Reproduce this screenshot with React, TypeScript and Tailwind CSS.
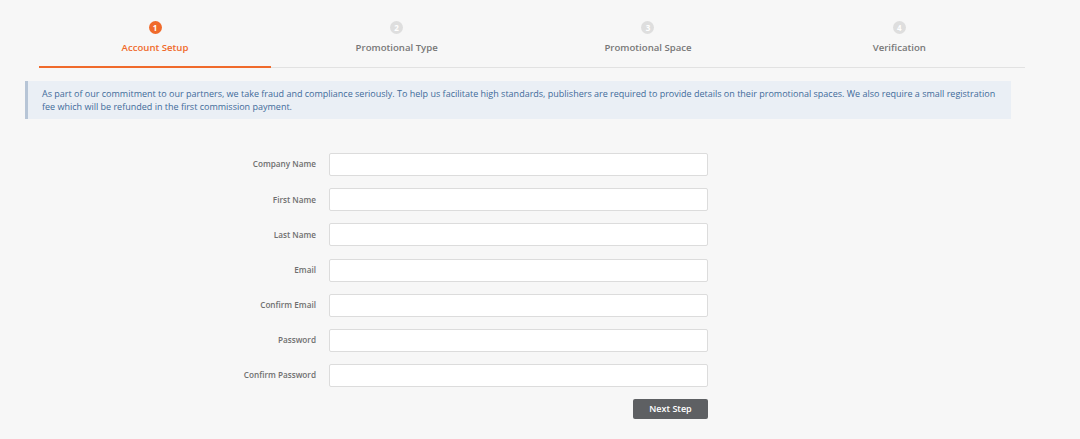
const steps = ['Account Setup', 'Promotional Type', 'Promotional Space', 'Verification'];

const fields = [
    'Company Name',
    'First Name',
    'Last Name',
    'Email',
    'Confirm Email',
    'Password',
    'Confirm Password',
];

export default function App() {
    return (
        <div
            className="min-h-[439px] w-[1080px] bg-[#f7f7f7] pt-[21px]"
            style={{ fontFamily: '"Open Sans", "Noto Sans", sans-serif' }}
        >
            {/* Stepper */}
            <div className="ml-[39px] flex w-[986px] border-b border-[#e2e2e2]">
                {steps.map((label, i) => {
                    const active = i === 0;
                    return (
                        <div
                            key={label}
                            className={
                                (i === 0 ? 'w-[232px] ' : 'flex-1 ') +
                                'flex flex-col items-center pb-[11px] -mb-px border-b-2 ' +
                                (active ? 'border-[#f06a2b]' : 'border-transparent')
                            }
                        >
                            <span
                                className={
                                    'flex h-[13px] w-[13px] items-center justify-center rounded-full text-[8px] font-bold leading-none text-white ' +
                                    (active ? 'bg-[#f06a2b]' : 'bg-[#dedede]')
                                }
                            >
                                {i + 1}
                            </span>
                            <span
                                className={
                                    'mt-[7px] text-[9.6px] font-semibold leading-[14px] ' +
                                    (active ? 'text-[#f06a2b]' : 'text-[#777]')
                                }
                            >
                                {label}
                            </span>
                        </div>
                    );
                })}
            </div>

            {/* Notice */}
            <div className="ml-[25px] mt-[13px] w-[986px] border-l-[3px] border-[#b7c5d6] bg-[#eaeff5] py-[6px] pl-[14px] pr-[4px] text-[9px] leading-[13px] text-[#3f6b9a]">
                As part of our commitment to our partners, we take fraud and compliance seriously. To help us facilitate high standards, publishers are required to provide details on their promotional spaces. We also require a small registration
                <br />
                fee which will be refunded in the first commission payment.
            </div>

            {/* Form */}
            <div className="mt-[34px] flex flex-col gap-[12.2px]">
                {fields.map((label) => (
                    <div key={label} className="flex items-center">
                        <label className="w-[316px] text-right text-[8.2px] font-semibold text-[#6f6f6f]">
                            {label}
                        </label>
                        <input
                            type={label.includes('Password') ? 'password' : 'text'}
                            className="ml-[13px] h-[23px] w-[379px] rounded-[2px] border border-[#dcdcdc] bg-white outline-none"
                        />
                    </div>
                ))}
            </div>

            <div className="mt-[12px] flex w-[708px] justify-end">
                <button className="h-[20px] w-[75px] rounded-[2px] bg-[#5e6063] text-[9px] font-semibold text-white">
                    Next Step
                </button>
            </div>
        </div>
    );
}
